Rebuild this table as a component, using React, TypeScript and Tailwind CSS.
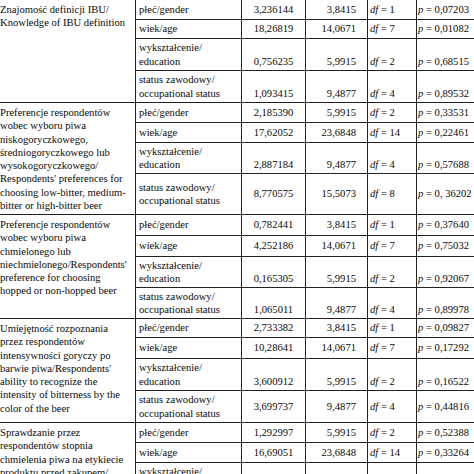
type Row = {
  label: string[];
  h: string;
  chi: string;
  crit: string;
  df: string;
  p: string;
  align: string;
};

type Group = { title: string[]; rows: Row[] };

const C = 'items-center';
const B = 'items-end pb-[2px]';

const groups: Group[] = [
  {
    title: ['Znajomość definicji IBU/', 'Knowledge of IBU definition'],
    rows: [
      { label: ['płeć/gender'], h: 'h-[20px]', chi: '3,236144', crit: '3,8415', df: '1', p: '0,07203', align: C },
      { label: ['wiek/age'], h: 'h-[19px]', chi: '18,26819', crit: '14,0671', df: '7', p: '0,01082', align: C },
      { label: ['wykształcenie/', 'education'], h: 'h-[32px]', chi: '0,756235', crit: '5,9915', df: '2', p: '0,68515', align: B },
      { label: ['status zawodowy/', 'occupational status'], h: 'h-[32px]', chi: '1,093415', crit: '9,4877', df: '4', p: '0,89532', align: B },
    ],
  },
  {
    title: [
      'Preferencje respondentów',
      'wobec wyboru piwa',
      'niskogoryczkowego,',
      'średniogoryczkowego lub',
      'wysokogoryczkowego/',
      "Respondents' preferences for",
      'choosing low-bitter, medium-',
      'bitter or high-bitter beer',
    ],
    rows: [
      { label: ['płeć/gender'], h: 'h-[20px]', chi: '2,185390', crit: '5,9915', df: '2', p: '0,33531', align: C },
      { label: ['wiek/age'], h: 'h-[20px]', chi: '17,62052', crit: '23,6848', df: '14', p: '0,22461', align: C },
      { label: ['wykształcenie/', 'education'], h: 'h-[31px]', chi: '2,887184', crit: '9,4877', df: '4', p: '0,57688', align: B },
      { label: ['status zawodowy/', 'occupational status'], h: 'h-[41px]', chi: '8,770575', crit: '15,5073', df: '8', p: '0, 36202', align: C },
    ],
  },
  {
    title: [
      'Preferencje respondentów',
      'wobec wyboru piwa',
      'chmielonego lub',
      "niechmielonego/Respondents'",
      'preference for choosing',
      'hopped or non-hopped beer',
    ],
    rows: [
      { label: ['płeć/gender'], h: 'h-[21px]', chi: '0,782441', crit: '3,8415', df: '1', p: '0,37640', align: C },
      { label: ['wiek/age'], h: 'h-[21px]', chi: '4,252186', crit: '14,0671', df: '7', p: '0,75032', align: C },
      { label: ['wykształcenie/', 'education'], h: 'h-[31px]', chi: '0,165305', crit: '5,9915', df: '2', p: '0,92067', align: B },
      { label: ['status zawodowy/', 'occupational status'], h: 'h-[31px]', chi: '1,065011', crit: '9,4877', df: '4', p: '0,89978', align: B },
    ],
  },
  {
    title: [
      'Umiejętność rozpoznania',
      'przez respondentów',
      'intensywności goryczy po',
      "barwie piwa/Respondents'",
      'ability to recognize the',
      'intensity of bitterness by the',
      'color of the beer',
    ],
    rows: [
      { label: ['płeć/gender'], h: 'h-[19px]', chi: '2,733382', crit: '3,8415', df: '1', p: '0,09827', align: C },
      { label: ['wiek/age'], h: 'h-[21px]', chi: '10,28641', crit: '14,0671', df: '7', p: '0,17292', align: C },
      { label: ['wykształcenie/', 'education'], h: 'h-[32px]', chi: '3,600912', crit: '5,9915', df: '2', p: '0,16522', align: B },
      { label: ['status zawodowy/', 'occupational status'], h: 'h-[32px]', chi: '3,699737', crit: '9,4877', df: '4', p: '0,44816', align: C },
    ],
  },
  {
    title: [
      'Sprawdzanie przez',
      'respondentów stopnia',
      'chmielenia piwa na etykiecie',
      'produktu przed zakupem/',
      'Respondents checking the',
      'degree of hopping of beer',
    ],
    rows: [
      { label: ['płeć/gender'], h: 'h-[20px]', chi: '1,292997', crit: '5,9915', df: '2', p: '0,52388', align: C },
      { label: ['wiek/age'], h: 'h-[20px]', chi: '16,69051', crit: '23,6848', df: '14', p: '0,33264', align: C },
      { label: ['wykształcenie/', 'education'], h: 'h-[32px]', chi: '', crit: '', df: '', p: '', align: B },
      { label: ['status zawodowy/', 'occupational status'], h: 'h-[32px]', chi: '', crit: '', df: '', p: '', align: B },
    ],
  },
];

export default function App() {
  return (
    <div className="w-[474px] h-[474px] overflow-hidden bg-white">
      <div
        className="w-[560px] text-[10.6px] leading-[13.3px] text-[#0a0a0a]"
        style={{ fontFamily: '"Liberation Serif", "Times New Roman", serif' }}
      >
        {groups.map((g, gi) => (
          <div key={gi} className="flex">
            <div className="w-[136px] shrink-0 border-r border-b border-[#222] pt-[3px] whitespace-nowrap">
              {g.title.map((t, i) => (
                <div key={i}>{t}</div>
              ))}
            </div>
            <div className="flex flex-col flex-1">
              {g.rows.map((r, ri) => (
                <div key={ri} className={`flex border-b border-[#222] ${r.h}`}>
                  <div className="w-[106px] shrink-0 border-r border-[#222] pl-[3px] flex flex-col justify-center whitespace-nowrap">
                    {r.label.map((l, i) => (
                      <div key={i}>{l}</div>
                    ))}
                  </div>
                  <div className={`w-[64px] shrink-0 border-r border-[#222] flex justify-center ${r.align}`}>
                    {r.chi}
                  </div>
                  <div className={`w-[62px] shrink-0 border-r border-[#222] flex justify-end pr-[11px] ${r.align}`}>
                    {r.crit}
                  </div>
                  <div className={`w-[49px] shrink-0 border-r border-[#222] flex pl-[2px] whitespace-nowrap ${r.align}`}>
                    {r.df && (
                      <span>
                        <i>df</i> = {r.df}
                      </span>
                    )}
                  </div>
                  <div className={`flex-1 flex pl-[1px] whitespace-nowrap ${r.align}`}>
                    {r.p && (
                      <span>
                        <i>p</i> = {r.p}
                      </span>
                    )}
                  </div>
                </div>
              ))}
            </div>
          </div>
        ))}
      </div>
    </div>
  );
}
